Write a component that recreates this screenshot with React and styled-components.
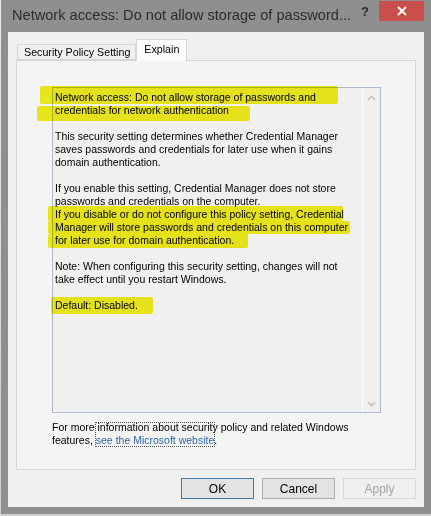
import styled, { createGlobalStyle } from 'styled-components';

const GlobalStyle = createGlobalStyle`
  html, body {
    margin: 0;
    padding: 0;
    background: #d8d8d8;
  }
  * {
    box-sizing: border-box;
  }
`;

const Page = styled.div`
  display: flex;
  width: 431px;
  height: 516px;
  padding: 0 0 2px 1px;
  overflow: hidden;
  background: linear-gradient(#e9e9e9, #cfcfcf);
  font-family: 'Liberation Sans', Arial, sans-serif;
`;

const Window = styled.div`
  flex: 1;
  min-width: 0;
  display: flex;
  flex-direction: column;
  background: #8f8f8f;
`;

const TitleBar = styled.div`
  display: flex;
  align-items: flex-start;
  height: 32px;
  padding: 0 7px 0 11px;
`;

const Title = styled.div`
  flex: 1;
  min-width: 0;
  padding-top: 7px;
  font-size: 14.6px;
  color: #2c2c2c;
  white-space: nowrap;
  overflow: hidden;
`;

const Help = styled.div`
  width: 10px;
  padding-top: 4px;
  margin-right: 8px;
  font-size: 13px;
  font-weight: bold;
  color: #2a2a2a;
`;

const CloseButton = styled.div`
  display: flex;
  align-items: center;
  justify-content: center;
  flex-shrink: 0;
  width: 45px;
  height: 20px;
  margin-top: 1px;
  background: #c9504a;
`;

const Client = styled.div`
  flex: 1;
  min-width: 0;
  display: flex;
  flex-direction: column;
  margin: 0 7px 7px 7px;
  padding: 7px 8px 8px 8px;
  background: #f0f0f0;
`;

const TabRow = styled.div`
  display: flex;
  align-items: flex-end;
  height: 21px;
  padding-left: 1px;
  position: relative;
  z-index: 1;
`;

const Tab = styled.div`
  height: ${(p) => (p.$active ? '22px' : '16px')};
  margin-bottom: ${(p) => (p.$active ? '-1px' : '0')};
  padding: ${(p) => (p.$active ? '3px 7px 0 7px' : '1px 5px 0 6px')};
  font-size: 10.7px;
  color: #000;
  background: ${(p) => (p.$active ? '#fcfcfc' : '#f0f0f0')};
  border: 1px solid #d6d6d6;
  border-bottom: ${(p) => (p.$active ? 'none' : '1px solid #d6d6d6')};
`;

const Panel = styled.div`
  flex: 1;
  min-width: 0;
  display: flex;
  flex-direction: column;
  padding: 26px 34px 0 35px;
  background: #f4f4f4;
  border: 1px solid #d6d6d6;
`;

const TextBox = styled.div`
  display: flex;
  height: 326px;
  background: #f0f0f0;
  border: 1px solid #adbbcf;
`;

const TextContent = styled.div`
  flex: 1;
  min-width: 0;
  padding: 3px 0 0 2px;
  font-size: 10.5px;
  line-height: 13px;
  color: #000;
`;

const Line = styled.div`
  position: relative;
  height: 13px;
  white-space: nowrap;

  &::before {
    content: '';
    display: ${(p) => (p.$hl ? 'block' : 'none')};
    position: absolute;
    left: ${(p) => (p.$hl ? p.$hl[0] : 0)}px;
    width: ${(p) => (p.$hl ? p.$hl[1] : 0)}px;
    top: ${(p) => (p.$hl ? p.$hl[2] : 0)}px;
    height: ${(p) => (p.$hl ? p.$hl[3] : 0)}px;
    background: #f4f01c;
    mix-blend-mode: multiply;
    border-radius: 2px;
  }
`;

const ScrollColumn = styled.div`
  display: flex;
  flex-direction: column;
  justify-content: space-between;
  align-items: center;
  flex-shrink: 0;
  width: 18px;
  padding: 7px 0 5px;
  border-left: 1px solid #fbfbfb;
`;

const Footer = styled.div`
  margin-top: 8px;
  font-size: 10.5px;
  line-height: 13px;
  color: #000;
  white-space: nowrap;
`;

const LinkText = styled.span`
  position: relative;
  color: #2f67ab;

  &::after {
    content: '';
    position: absolute;
    left: -1px;
    right: -1px;
    top: -12px;
    bottom: -1px;
    border: 1px dotted #555;
  }
`;

const ButtonRow = styled.div`
  display: flex;
  justify-content: flex-end;
  gap: 8px;
  margin-top: 8px;
`;

const Button = styled.div`
  display: flex;
  align-items: center;
  justify-content: center;
  width: 73px;
  height: 21px;
  font-size: 12px;
  color: ${(p) => (p.$disabled ? '#a2a2a2' : '#000')};
  background: ${(p) => (p.$disabled ? '#efefef' : '#e3e3e3')};
  border: 1px solid
    ${(p) => (p.$default ? '#3d7bad' : p.$disabled ? '#d8d8d8' : '#adadad')};
`;

const Chevron = ({ up }) => (
  <svg width="9" height="6" viewBox="0 0 9 6">
    <polyline
      points={up ? '1,5 4.5,1.5 8,5' : '1,1 4.5,4.5 8,1'}
      fill="none"
      stroke="#c2c2c2"
      strokeWidth="1.6"
    />
  </svg>
);

const lines = [
  ['Network access: Do not allow storage of passwords and', [-15, 298, -5, 18]],
  ['credentials for network authentication', [-18, 213, 2, 15]],
  [''],
  ['This security setting determines whether Credential Manager'],
  ['saves passwords and credentials for later use when it gains'],
  ['domain authentication.'],
  [''],
  ['If you enable this setting, Credential Manager does not store'],
  ['passwords and credentials on the computer.'],
  ['If you disable or do not configure this policy setting, Credential', [-7, 295, -2, 15]],
  ['Manager will store passwords and credentials on this computer', [-7, 302, 0, 13]],
  ['for later use for domain authentication.', [-7, 200, 0, 14]],
  [''],
  ['Note: When configuring this security setting, changes will not'],
  ['take effect until you restart Windows.'],
  [''],
  ['Default: Disabled.', [-4, 102, -2, 17]],
];

export default function App() {
  return (
    <>
      <GlobalStyle />
      <Page>
        <Window>
          <TitleBar>
            <Title>Network access: Do not allow storage of password...</Title>
            <Help>?</Help>
            <CloseButton>
              <svg width="10" height="10" viewBox="0 0 10 10">
                <path d="M1 1 L9 9 M9 1 L1 9" stroke="#fff" strokeWidth="1.8" />
              </svg>
            </CloseButton>
          </TitleBar>
          <Client>
            <TabRow>
              <Tab>Security Policy Setting</Tab>
              <Tab $active>Explain</Tab>
            </TabRow>
            <Panel>
              <TextBox>
                <TextContent>
                  {lines.map(([text, hl], i) => (
                    <Line key={i} $hl={hl}>
                      {text}
                    </Line>
                  ))}
                </TextContent>
                <ScrollColumn>
                  <Chevron up />
                  <Chevron />
                </ScrollColumn>
              </TextBox>
              <Footer>
                For more information about security policy and related Windows
                <br />
                features, <LinkText>see the Microsoft website</LinkText>.
              </Footer>
            </Panel>
            <ButtonRow>
              <Button $default>OK</Button>
              <Button>Cancel</Button>
              <Button $disabled>Apply</Button>
            </ButtonRow>
          </Client>
        </Window>
      </Page>
    </>
  );
}
